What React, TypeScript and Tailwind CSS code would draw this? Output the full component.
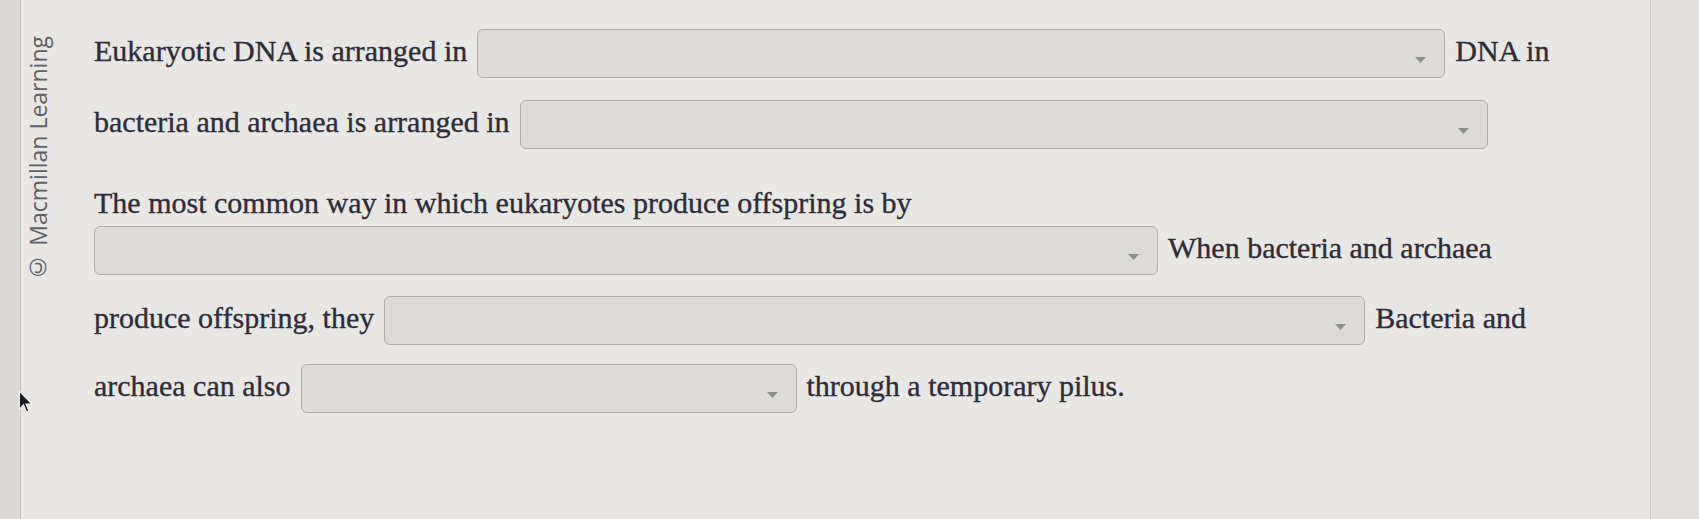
import React from "react"

const serif = "font-['Liberation_Serif','Times_New_Roman',serif]"

// Empty dropdown blank used inside the fill-in sentences
function Blank({ width }: { width: string }) {
  return (
    <div
      className={`${width} h-[49px] shrink-0 rounded-[6px] border border-[#afaeab] bg-[#dcdbd7] flex items-center justify-end pr-[18px] pt-[12px]`}
    >
      <svg width="11" height="6" viewBox="0 0 11 6">
        <path d="M0 0 L11 0 L5.5 6 Z" fill="#8e8e90" />
      </svg>
    </div>
  )
}

function Words({ children }: { children: React.ReactNode }) {
  return <span className="mt-[5px] shrink-0 whitespace-nowrap leading-[34px]">{children}</span>
}

export default function App() {
  return (
    <div className="relative flex h-[519px] w-[1699px] overflow-hidden bg-[#dcdad6]">
      {/* left edge of the window */}
      <div className="w-[20px] shrink-0 bg-[#dbd9d5]" />

      {/* question panel */}
      <div className="flex flex-1 border-l border-r border-[#c8c6c2] bg-[#e8e7e3]">
        <div className="flex w-[34px] shrink-0 items-start justify-center pt-[36px]">
          <span className="rotate-180 whitespace-nowrap font-['Open_Sans','Liberation_Sans',sans-serif] text-[23px] leading-[25px] text-[#616066] [writing-mode:vertical-rl]">
            © Macmillan Learning
          </span>
        </div>

        <div
          className={`flex flex-col pl-[39px] pt-[29px] text-[30px] text-[#2e2c3b] [-webkit-text-stroke:0.35px_#2e2c3b] ${serif}`}
        >
          <div className="flex items-start gap-[10px]">
            <Words>Eukaryotic DNA is arranged in</Words>
            <Blank width="w-[968px]" />
            <Words>DNA in</Words>
          </div>

          <div className="mt-[22px] flex items-start gap-[10px]">
            <Words>bacteria and archaea is arranged in</Words>
            <Blank width="w-[968px]" />
          </div>

          <p className="mt-[37px] leading-[34px]">
            The most common way in which eukaryotes produce offspring is by
          </p>

          <div className="mt-[6px] flex items-start gap-[10px]">
            <Blank width="w-[1064px]" />
            <Words>When bacteria and archaea</Words>
          </div>

          <div className="mt-[21px] flex items-start gap-[10px]">
            <Words>produce offspring, they</Words>
            <Blank width="w-[981px]" />
            <Words>Bacteria and</Words>
          </div>

          <div className="mt-[19px] flex items-start gap-[10px]">
            <Words>archaea can also</Words>
            <Blank width="w-[496px]" />
            <Words>through a temporary pilus.</Words>
          </div>
        </div>
      </div>

      {/* neighbouring column to the right */}
      <div className="w-[48px] shrink-0 bg-[#e2dfdd]" />

      {/* mouse pointer over the page */}
      <svg className="absolute left-[18px] top-[390px]" width="17" height="25" viewBox="0 0 14 21">
        <path d="M1 1 L1 16 L4.5 12.5 L7 18.5 L9 17.5 L6.6 11.8 L11.5 11.8 Z" fill="#1d1b22" stroke="#f4f3f1" strokeWidth="1" />
      </svg>
    </div>
  )
}
